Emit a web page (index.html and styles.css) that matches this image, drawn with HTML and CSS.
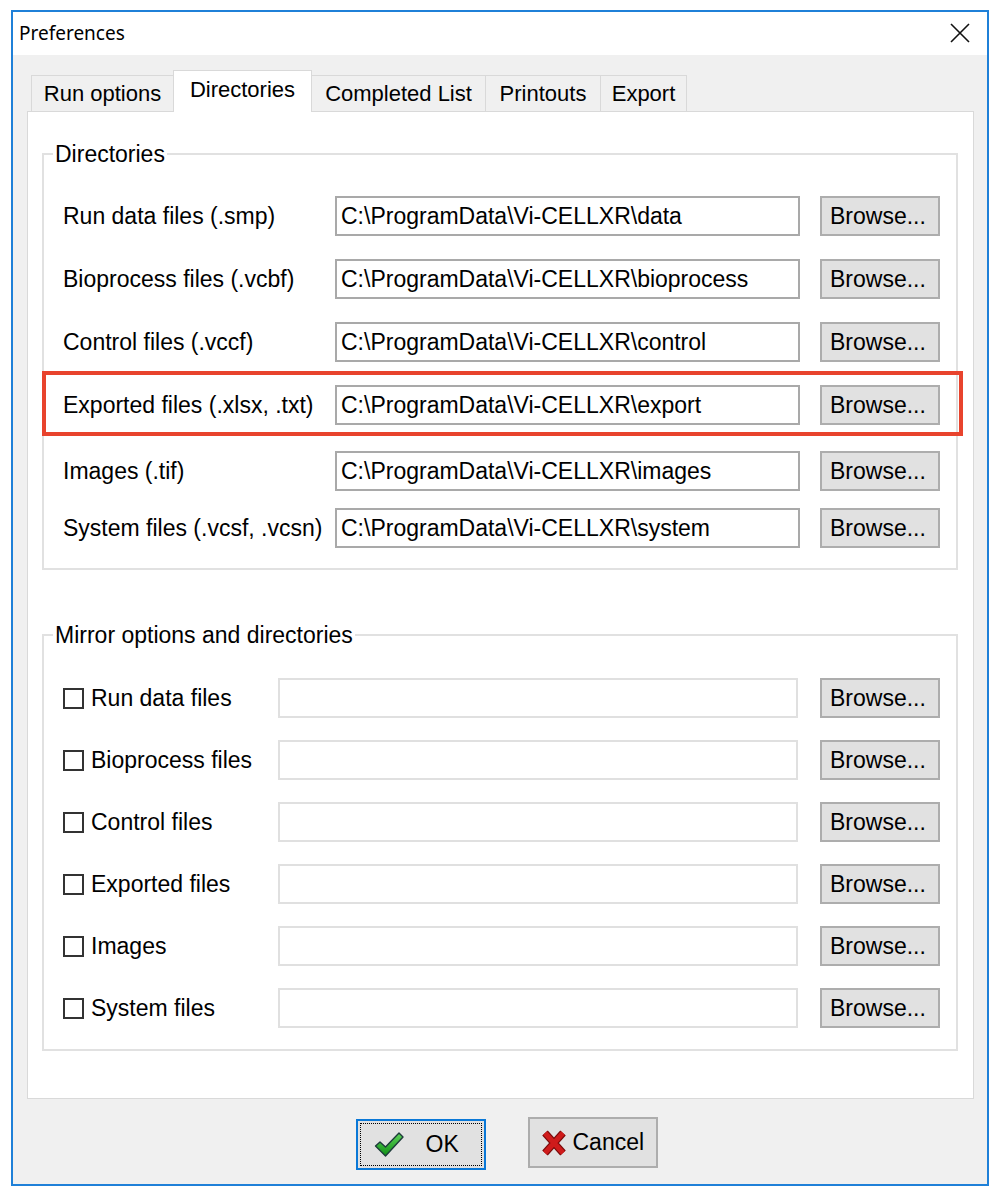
FILE: index.html
```html
<!DOCTYPE html>
<html>
<head>
<meta charset="utf-8">
<title>Preferences</title>
<link rel="stylesheet" href="styles.css">
</head>
<body>
<div class="window">
  <div class="titlebar">
    <span class="title">Preferences</span>
    <svg class="close" width="20" height="20" viewBox="0 0 20 20"><path d="M1 1 L19 19 M19 1 L1 19" stroke="#111" stroke-width="1.6" fill="none"/></svg>
  </div>
  <div class="client">
    <div class="tabs">
      <div class="tab t1">Run options</div>
      <div class="tab t2 active">Directories</div>
      <div class="tab t3">Completed List</div>
      <div class="tab t4">Printouts</div>
      <div class="tab t5">Export</div>
    </div>
    <div class="panel">
      <fieldset class="group">
        <legend>Directories</legend>
        <div class="rows dirs">
          <div class="row"><span class="label">Run data files (.smp)</span><div class="path">C:\ProgramData\Vi-CELLXR\data</div><div class="btn">Browse...</div></div>
          <div class="row"><span class="label">Bioprocess files (.vcbf)</span><div class="path">C:\ProgramData\Vi-CELLXR\bioprocess</div><div class="btn">Browse...</div></div>
          <div class="row"><span class="label">Control files (.vccf)</span><div class="path">C:\ProgramData\Vi-CELLXR\control</div><div class="btn">Browse...</div></div>
          <div class="row highlighted"><span class="label">Exported files (.xlsx, .txt)</span><div class="path">C:\ProgramData\Vi-CELLXR\export</div><div class="btn">Browse...</div><div class="redbox"></div></div>
          <div class="row r5"><span class="label">Images (.tif)</span><div class="path">C:\ProgramData\Vi-CELLXR\images</div><div class="btn">Browse...</div></div>
          <div class="row r6"><span class="label">System files (.vcsf, .vcsn)</span><div class="path">C:\ProgramData\Vi-CELLXR\system</div><div class="btn">Browse...</div></div>
        </div>
      </fieldset>
      <fieldset class="group mirror">
        <legend>Mirror options and directories</legend>
        <div class="rows mirrors">
          <div class="row"><span class="label"><span class="check"></span>Run data files</span><div class="path empty"></div><div class="btn">Browse...</div></div>
          <div class="row"><span class="label"><span class="check"></span>Bioprocess files</span><div class="path empty"></div><div class="btn">Browse...</div></div>
          <div class="row"><span class="label"><span class="check"></span>Control files</span><div class="path empty"></div><div class="btn">Browse...</div></div>
          <div class="row"><span class="label"><span class="check"></span>Exported files</span><div class="path empty"></div><div class="btn">Browse...</div></div>
          <div class="row"><span class="label"><span class="check"></span>Images</span><div class="path empty"></div><div class="btn">Browse...</div></div>
          <div class="row"><span class="label"><span class="check"></span>System files</span><div class="path empty"></div><div class="btn">Browse...</div></div>
        </div>
      </fieldset>
    </div>
    <div class="actions">
      <div class="dlgbtn ok">
        <svg class="icon-ok" width="30" height="27" viewBox="0 0 30 27">
          <defs><linearGradient id="g" x1="0" y1="0" x2="0" y2="1"><stop offset="0" stop-color="#5fd45a"/><stop offset="1" stop-color="#0f8f15"/></linearGradient></defs>
          <path d="M1.5 15 L6 11 L11.5 16 L25 2 L29 6 L11.5 25 Z" fill="url(#g)" stroke="#1d3b3a" stroke-width="1.4" stroke-linejoin="round"/>
        </svg>
        <span>OK</span>
      </div>
      <div class="dlgbtn cancel">
        <svg class="icon-x" width="24" height="26" viewBox="0 0 24 26">
          <path d="M3 3 L21 23 M21 3 L3 23" stroke="#7a0a0a" stroke-width="7.5" stroke-linecap="butt"/>
          <path d="M3 3 L21 23 M21 3 L3 23" stroke="#cf1b1b" stroke-width="5" stroke-linecap="butt"/>
        </svg>
        <span>Cancel</span>
      </div>
    </div>
  </div>
</div>
</body>
</html>
```

FILE: styles.css
```css
html, body {
  margin: 0;
  padding: 0;
  background: #ffffff;
}
body {
  font-family: "Liberation Sans", Arial, sans-serif;
  color: #000;
}
.window {
  box-sizing: border-box;
  width: 978px;
  height: 1176px;
  margin: 10px 0 0 11px;
  border: 2px solid #1f80d8;
  background: #f0f0f0;
  display: flex;
  flex-direction: column;
}
.titlebar {
  height: 43px;
  flex: none;
  background: #ffffff;
  display: flex;
  align-items: center;
  justify-content: space-between;
  padding: 0 17px 0 6px;
}
.title {
  font-family: "Noto Sans", "Liberation Sans", sans-serif;
  font-size: 19px;
  position: relative;
  top: -1px;
}
.close {
  display: block;
  position: relative;
  top: -1px;
}
.client {
  flex: 1;
  padding: 15px 13px 0 14px;
  display: flex;
  flex-direction: column;
}
.tabs {
  display: flex;
  align-items: flex-end;
  height: 41px;
  padding-left: 4px;
  position: relative;
  z-index: 2;
}
.tab {
  box-sizing: border-box;
  height: 36px;
  border: 1px solid #d9d9d9;
  border-bottom: none;
  margin-left: -1px;
  background: #f0f0f0;
  font-size: 22px;
  line-height: 35px;
  text-align: center;
  white-space: nowrap;
}
.tab.t1 { width: 143px; margin-left: 0; }
.tab.t2 { width: 139px; }
.tab.t3 { width: 175px; }
.tab.t4 { width: 116px; }
.tab.t5 { width: 87px; }
.tab.active {
  height: 42px;
  margin-bottom: -1px;
  background: #ffffff;
  line-height: 38px;
  position: relative;
  z-index: 3;
}
.panel {
  box-sizing: border-box;
  height: 988px;
  background: #ffffff;
  border: 1px solid #d9d9d9;
  padding: 29px 15px 0 14px;
  position: relative;
  z-index: 1;
}
.group {
  margin: 0;
  padding: 0;
  border: 2px solid #e1e1e1;
  min-width: 0;
}
.group legend {
  margin-left: 9px;
  padding: 0 2px;
  font-size: 23px;
  line-height: 26px;
}
.group.mirror {
  margin-top: 52px;
}
.rows {
  display: flex;
  flex-direction: column;
}
.rows.dirs {
  padding: 29px 16px 20px 19px;
  gap: 23px;
}
.rows.dirs .r5 {
  margin-top: 3px;
}
.rows.dirs .r6 {
  margin-top: -6px;
}
.rows.mirrors {
  padding: 30px 16px 21px 19px;
  gap: 22px;
}
.row {
  display: flex;
  align-items: center;
  height: 40px;
  position: relative;
}
.label {
  font-size: 23px;
  white-space: nowrap;
  flex: none;
  display: flex;
  align-items: center;
}
.dirs .label {
  width: 272px;
}
.mirrors .label {
  width: 215px;
}
.path {
  box-sizing: border-box;
  height: 40px;
  border: 2px solid #a9a9a9;
  background: #fff;
  font-size: 23px;
  line-height: 36px;
  padding-left: 4px;
  white-space: nowrap;
  overflow: hidden;
  flex: none;
  width: 465px;
  margin-right: 20px;
}
.path.empty {
  width: 520px;
  border: 2px solid #e0e0e0;
  margin-right: 22px;
}
.btn {
  box-sizing: border-box;
  width: 120px;
  height: 40px;
  background: #e1e1e1;
  border: 2px solid #adadad;
  font-size: 23px;
  line-height: 36px;
  padding-left: 8px;
  white-space: nowrap;
  flex: none;
}
.check {
  box-sizing: border-box;
  width: 21px;
  height: 21px;
  border: 2px solid #333333;
  background: #fff;
  margin-right: 7px;
  flex: none;
}
.redbox {
  position: absolute;
  left: -21px;
  right: -23px;
  top: -14px;
  bottom: -11px;
  border: 4px solid #e8432d;
  pointer-events: none;
}
.actions {
  display: flex;
  justify-content: center;
  align-items: flex-start;
  gap: 42px;
  padding-left: 12px;
  margin-top: 18px;
}
.dlgbtn {
  box-sizing: border-box;
  width: 130px;
  height: 51px;
  background: #e1e1e1;
  border: 2px solid #adadad;
  display: flex;
  align-items: center;
  font-size: 23px;
}
.dlgbtn.ok {
  margin-top: 2px;
  border-color: #0a78d7;
  outline: 1px dotted #000;
  outline-offset: -5px;
  padding-left: 16px;
  gap: 22px;
}
.dlgbtn.cancel {
  padding-left: 12px;
  gap: 7px;
}
.icon-ok, .icon-x {
  display: block;
  flex: none;
}
```
